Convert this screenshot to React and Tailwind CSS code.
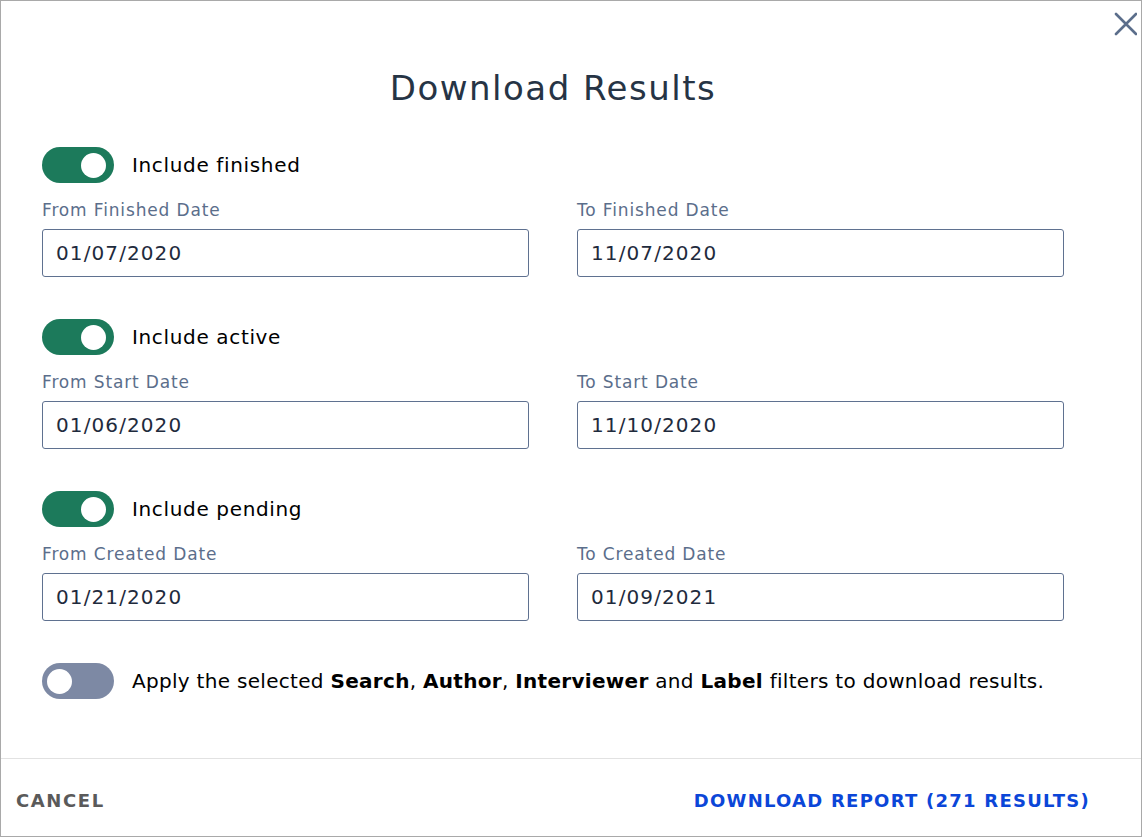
import React, { useState } from 'react'

const font = { fontFamily: '"DejaVu Sans", "Noto Sans", sans-serif' }

function Toggle({ on, onChange }) {
  return (
    <button
      type="button"
      onClick={onChange}
      className={`w-[72px] h-[36px] rounded-full flex items-center shrink-0 ${on ? 'bg-[#1c7a5b] justify-end pr-[8px]' : 'bg-[#7d89a4] justify-start pl-[5px]'}`}
    >
      <span className="w-[25px] h-[25px] rounded-full bg-white block" />
    </button>
  )
}

function DateField({ label, value }) {
  return (
    <div className="flex flex-col">
      <label className="text-[17px] leading-[24px] text-[#5b6e8b] tracking-[0.85px]">{label}</label>
      <div className="mt-[7px] h-[48px] border border-[#5f7190] rounded-[3px] flex items-center px-[13px] text-[20px] text-[#1f2b3d] tracking-[1.1px]">
        {value}
      </div>
    </div>
  )
}

function Section({ title, on, onToggle, from, to }) {
  return (
    <div className="mb-[42px]">
      <div className="flex items-center gap-[18px] h-[36px]">
        <Toggle on={on} onChange={onToggle} />
        <span className="text-[20px] text-black tracking-[0.65px]">{title}</span>
      </div>
      <div className="grid grid-cols-2 gap-[48px] mt-[15px] w-[1022px]">
        <DateField label={from[0]} value={from[1]} />
        <DateField label={to[0]} value={to[1]} />
      </div>
    </div>
  )
}

export default function App() {
  const [flags, setFlags] = useState({ finished: true, active: true, pending: true, filters: false })
  const flip = k => setFlags(f => ({ ...f, [k]: !f[k] }))

  return (
    <div style={font} className="w-[1142px] h-[837px] border border-[#a9a9a9] bg-white relative flex flex-col">
      <button type="button" className="absolute right-[4px] top-[11px] w-[24px] h-[24px]">
        <svg viewBox="0 0 24 24" width="24" height="24" fill="none" stroke="#5b6e8b" strokeWidth="2.6" strokeLinecap="round">
          <path d="M3 2 L23 22 M23 2 L3 22" />
        </svg>
      </button>

      <h1 className="mt-[67px] text-center text-[34px] leading-[40px] text-[#263445] tracking-[1.5px] pr-[36px]">Download Results</h1>

      <div className="pl-[41px] mt-[39px]">
        <Section
          title="Include finished"
          on={flags.finished}
          onToggle={() => flip('finished')}
          from={['From Finished Date', '01/07/2020']}
          to={['To Finished Date', '11/07/2020']}
        />
        <Section
          title="Include active"
          on={flags.active}
          onToggle={() => flip('active')}
          from={['From Start Date', '01/06/2020']}
          to={['To Start Date', '11/10/2020']}
        />
        <Section
          title="Include pending"
          on={flags.pending}
          onToggle={() => flip('pending')}
          from={['From Created Date', '01/21/2020']}
          to={['To Created Date', '01/09/2021']}
        />
        <div className="flex items-center gap-[18px] h-[36px]">
          <Toggle on={flags.filters} onChange={() => flip('filters')} />
          <span className="text-[20px] text-black tracking-[0.3px]">
            Apply the selected <b>Search</b>, <b>Author</b>, <b>Interviewer</b> and <b>Label</b> filters to download results.
          </span>
        </div>
      </div>

      <div className="mt-auto border-t border-[#e2e2e2] h-[78px] flex items-center justify-between pl-[15px] pr-[51px] pt-[6px]">
        <button type="button" className="text-[18px] font-bold text-[#5a5a5a] tracking-[1.6px]">CANCEL</button>
        <button type="button" className="text-[18px] font-bold text-[#0b46d8] tracking-[1.25px]">DOWNLOAD REPORT (271 RESULTS)</button>
      </div>
    </div>
  )
}
